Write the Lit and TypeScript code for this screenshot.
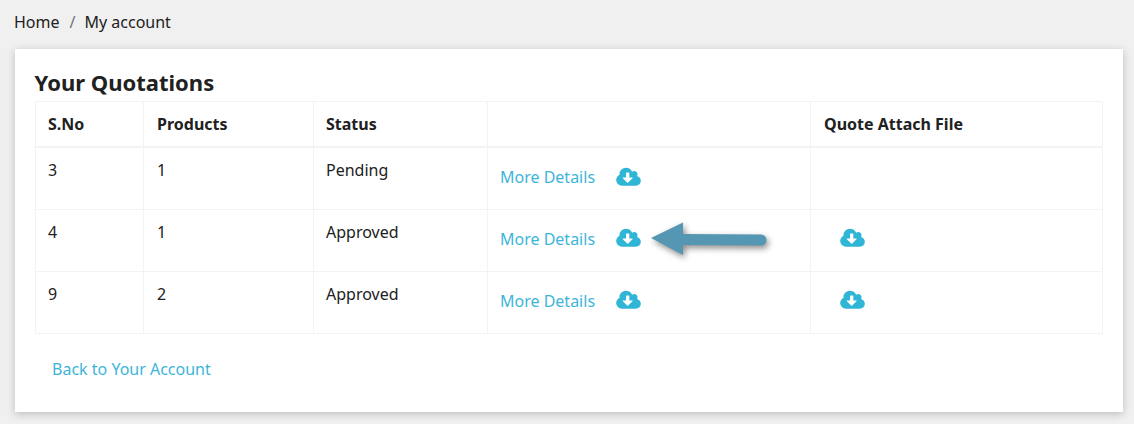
import { LitElement, html, css, svg } from "lit";
import { customElement } from "lit/decorators.js";

const cloud = html`<svg class="cloud" viewBox="0 0 1920 1792"><path fill="currentColor" d="M1280 928q0-14-9-23t-23-9h-224v-352q0-13-9.5-22.5t-22.5-9.5h-192q-13 0-22.5 9.5t-9.5 22.5v352h-224q-13 0-22.5 9.5t-9.5 22.5q0 14 9 23l352 352q9 9 23 9t23-9l351-351q10-12 10-24zm640 224q0 159-112.5 271.5t-271.5 112.5h-1088q-185 0-316.5-131.5t-131.5-316.5q0-130 70-240t188-165q-2-30-2-43 0-212 150-362t362-150q156 0 285.5 87t188.5 231q71-62 166-62 106 0 181 75t75 181q0 76-41 138 130 31 213.5 135.5t83.5 238.5z"/></svg>`;

const rows = [
  { n: "3", p: "1", s: "Pending", file: false },
  { n: "4", p: "1", s: "Approved", file: true },
  { n: "9", p: "2", s: "Approved", file: true },
];

@customElement("app-root")
export class AppRoot extends LitElement {
  static styles = css`
    :host { display: block; position: relative; width: 1134px; height: 424px; overflow: hidden; background: #f0f0f0; font-family: "Noto Sans", "Open Sans", sans-serif; font-size: 16px; color: #212121; }
    .crumbs { display: flex; gap: 10px; padding: 11px 0 0 14px; height: 49px; box-sizing: border-box; line-height: 22px; color: #212121; }
    .sep { color: #6c757d; margin-right: -1px; }
    .card { margin-left: 15px; width: 1108px; height: 363px; box-sizing: border-box; background: #fff; padding: 15px 20px 0 20px; box-shadow: 0 2px 8px rgba(0,0,0,.22); }
    h2 { margin: 0 0 0 -0.5px; font-size: 22px; line-height: 37px; font-weight: 700; color: #212121; }
    table { border-collapse: collapse; table-layout: fixed; width: 1067px; }
    th, td { border: 1px solid #f3f3f3; padding: 10px 12px 0; text-align: left; vertical-align: top; line-height: 24px; font-size: 16px; }
    th { border-bottom-width: 2px; font-weight: 700; height: 24px; padding-top: 10px; padding-bottom: 10px; }
    th:nth-child(2), td:nth-child(2), th:nth-child(5) { padding-left: 13px; }
    td { height: 62px; box-sizing: border-box; }
    a { color: #3db5d8; text-decoration: none; }
    .act { display: flex; align-items: center; gap: 21px; padding-top: 7px; }
    .cloud { display: block; width: 25px; height: 23px; color: #2fb5d6; }
    .file { padding: 7px 0 0 17px; }
    .back { display: block; margin: 23px 0 0 17px; line-height: 24px; }
    .arrow { position: absolute; left: 645px; top: 215px; width: 130px; height: 50px; overflow: visible; filter: drop-shadow(2px 3px 3px rgba(0,0,0,.45)); }
  `;

  render() {
    return html`
      <nav class="crumbs"><span>Home</span><span class="sep">/</span><span>My account</span></nav>
      <section class="card">
        <h2>Your Quotations</h2>
        <table>
          <colgroup><col style="width:108px" /><col style="width:170px" /><col style="width:174px" /><col style="width:323px" /><col style="width:292px" /></colgroup>
          <thead><tr><th>S.No</th><th>Products</th><th>Status</th><th></th><th>Quote Attach File</th></tr></thead>
          <tbody>
            ${rows.map(
              (r) => html`<tr>
                <td>${r.n}</td><td>${r.p}</td><td>${r.s}</td>
                <td><div class="act"><a href="#">More Details</a><a href="#">${cloud}</a></div></td>
                <td>${r.file ? html`<div class="file"><a href="#">${cloud}</a></div>` : ""}</td>
              </tr>`
            )}
          </tbody>
        </table>
        <a class="back" href="#">Back to Your Account</a>
      </section>
      <svg class="arrow" viewBox="0 0 130 50">${svg`<path fill="#5596b3" d="M6 23 38 7.5V19l78 .5a5.5 5.5 0 0 1 0 11l-78-.5v10z"/>`}</svg>
    `;
  }
}
